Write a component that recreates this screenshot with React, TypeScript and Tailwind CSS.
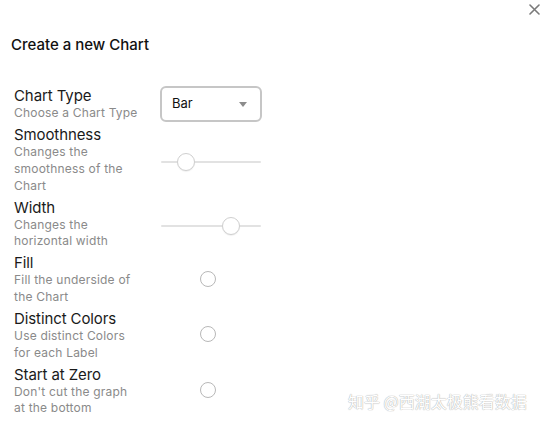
import React from "react";

const font = "font-['Inter','Liberation_Sans',sans-serif]";

function Row({
  title,
  desc,
  children,
}: {
  title: string;
  desc: React.ReactNode;
  children: React.ReactNode;
}) {
  return (
    <div className="flex items-center">
      <div className="w-[160px] shrink-0 pl-[14px]">
        <div className="text-[15px] leading-[18px] tracking-[-0.1px] text-[#1a1a1a]">{title}</div>
        <div className="w-[125px] text-[12px] leading-[16.85px] tracking-[0.2px] text-[#8a8a8a]">{desc}</div>
      </div>
      <div className="w-[104px] shrink-0">{children}</div>
    </div>
  );
}

function Slider({ pos }: { pos: number }) {
  return (
    <div className="pt-[3px]">
      <div className="relative ml-[1px] h-[18px] w-[100px]">
        <div className="absolute left-0 right-0 top-[8px] h-[2px] rounded bg-[#e2e2e2]" />
        <div
          className="absolute top-0 h-[18px] w-[18px] rounded-full border border-[#cfcfcf] bg-white shadow-[0_1px_1px_rgba(0,0,0,0.06)]"
          style={{ left: pos - 9 }}
        />
      </div>
    </div>
  );
}

function Radio() {
  return <div className="mb-[3px] ml-[40px] h-[16px] w-[16px] rounded-full border border-[#b8b8b8] bg-white" />;
}

export default function App() {
  return (
    <div className={`relative h-[425px] w-[546px] overflow-hidden bg-white ${font}`}>
      <svg
        className="absolute left-[529px] top-[4px]"
        width="11"
        height="11"
        viewBox="0 0 11 11"
        fill="none"
        stroke="#7a7a7a"
        strokeWidth="1.6"
        strokeLinecap="round"
      >
        <path d="M1 1L10 10M10 1L1 10" />
      </svg>

      <div className="pl-[11px] pt-[36px] text-[15px] font-medium leading-[18px] text-[#111]">
        Create a new Chart
      </div>

      <div className="mt-[32px] flex flex-col gap-[4px]">
        <Row title="Chart Type" desc="Choose a Chart Type">
          <div className="flex h-[36px] w-[102px] items-center justify-between rounded-[6px] border-2 border-[#c6c6c6] pl-[10px] pr-[13px]">
            <span className="text-[13px] text-[#111]">Bar</span>
            <svg width="8" height="5" viewBox="0 0 8 5">
              <path d="M0 0H8L4 5Z" fill="#8c8c8c" />
            </svg>
          </div>
        </Row>
        <Row title="Smoothness" desc="Changes the smoothness of the Chart">
          <Slider pos={25} />
        </Row>
        <Row title="Width" desc="Changes the horizontal width">
          <Slider pos={70} />
        </Row>
        <Row title="Fill" desc="Fill the underside of the Chart">
          <Radio />
        </Row>
        <Row title="Distinct Colors" desc="Use distinct Colors for each Label">
          <Radio />
        </Row>
        <Row title="Start at Zero" desc="Don't cut the graph at the bottom">
          <Radio />
        </Row>
      </div>

      <div className="absolute left-[348px] top-[391px] font-['Noto_Sans_CJK_SC',sans-serif] text-[16px] leading-[20px] text-white [text-shadow:0_0_1px_#b0b0b0,0_0_1px_#b0b0b0]">
        知乎 @西湖太极熊看数据
      </div>
    </div>
  );
}
